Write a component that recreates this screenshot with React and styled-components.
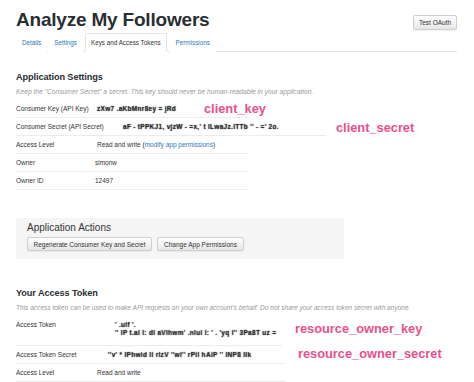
import styled, { createGlobalStyle } from "styled-components";

const GlobalStyle = createGlobalStyle`
  html, body {
    margin: 0;
    padding: 0;
    background: #ffffff;
  }
  body {
    font-family: "Liberation Sans", Arial, sans-serif;
    color: #333333;
  }
`;

const Page = styled.div`
  width: 474px;
  height: 382px;
  overflow: hidden;
  box-sizing: border-box;
  padding: 0 17px 0 16px;
`;

const Header = styled.div`
  display: flex;
  justify-content: space-between;
  align-items: flex-start;
  padding-top: 8px;
`;

const Title = styled.h1`
  margin: 0;
  font-size: 19px;
  line-height: 24px;
  font-weight: bold;
  letter-spacing: -0.2px;
  color: #292f33;
`;

const SmallButton = styled.button`
  font-family: "Liberation Sans", Arial, sans-serif;
  font-size: 6.5px;
  color: #333;
  width: ${(p) => p.$w}px;
  height: 14px;
  padding: 0;
  white-space: nowrap;
  border: 1px solid #cfcfcf;
  border-radius: 2px;
  background: linear-gradient(#ffffff, #e6e6e6);
  box-shadow: 0 1px 1px rgba(0, 0, 0, 0.05);
  cursor: pointer;
`;

const TestButton = styled(SmallButton)`
  margin-top: 7px;
  height: 15px;
`;

const Tabs = styled.div`
  display: flex;
  margin-top: 1px;
  border-bottom: 1px solid #e4e4e4;
`;

const Tab = styled.div`
  height: 19px;
  box-sizing: border-box;
  display: flex;
  align-items: center;
  padding: 0 5px;
  margin-right: ${(p) => (p.$active ? 3 : 1)}px;
  margin-left: ${(p) => (p.$active ? 1 : 0)}px;
  margin-bottom: -1px;
  font-size: 6.3px;
  color: ${(p) => (p.$active ? "#333" : "#2b7bb9")};
  background: #fff;
  border: 1px solid ${(p) => (p.$active ? "#e4e4e4" : "transparent")};
  border-bottom-color: ${(p) => (p.$active ? "#fff" : "transparent")};
  border-radius: 2px 2px 0 0;
`;

const Section = styled.section`
  margin-top: ${(p) => p.$top}px;
`;

const Heading = styled.h2`
  margin: 0;
  font-size: 9.2px;
  line-height: 12px;
  font-weight: bold;
  letter-spacing: -0.1px;
  color: #292f33;
`;

const Note = styled.p`
  margin: 4px 0 0;
  font-size: ${(p) => p.$size || 6.6}px;
  line-height: 10px;
  font-style: italic;
  color: #999;
  white-space: nowrap;
`;

const Table = styled.div`
  margin-top: ${(p) => p.$top || 3}px;
  display: flex;
  flex-direction: column;
`;

const Row = styled.div`
  position: relative;
  display: flex;
  align-items: ${(p) => (p.$tall ? "flex-start" : "center")};
  box-sizing: border-box;
  width: ${(p) => p.$w}px;
  height: ${(p) => p.$h || 18}px;
  padding-top: ${(p) => (p.$tall ? 5 : 0)}px;
  border-bottom: 1px solid #ececec;
  font-size: 6.5px;
  line-height: 8px;
`;

const Label = styled.div`
  flex: 0 0 ${(p) => p.$w || 80}px;
  color: #333;
`;

const Value = styled.div`
  color: #333;
  white-space: nowrap;
`;

const Link = styled.a`
  color: #2b7bb9;
  text-decoration: none;
`;

/* obfuscated key text, smudged like the screenshot */
const Hidden = styled.span`
  display: block;
  white-space: nowrap;
  color: transparent;
  font-weight: bold;
  letter-spacing: 0.3px;
  text-shadow: 0 0 1.1px rgba(20, 20, 20, 0.95), 0 0 0.4px rgba(20, 20, 20, 0.6);
`;

const Tag = styled.span`
  position: absolute;
  left: ${(p) => p.$x}px;
  top: ${(p) => p.$y}px;
  font-size: 12.8px;
  line-height: 15px;
  font-weight: bold;
  color: #e9508b;
  white-space: nowrap;
  text-shadow: 0 0 2px #fff, 0 0 1px #fff;
`;

const ActionsBox = styled.div`
  margin-top: 28px;
  width: 328px;
  box-sizing: border-box;
  padding: 4px 11px 8px;
  background: #f5f5f5;
`;

const ActionsTitle = styled.h3`
  margin: 0 0 3px;
  font-size: 10px;
  line-height: 12px;
  font-weight: normal;
  color: #333;
`;

const ButtonRow = styled.div`
  display: flex;
  gap: 5px;
`;

export default function App() {
  return (
    <Page>
      <GlobalStyle />
      <Header>
        <Title>Analyze My Followers</Title>
        <TestButton $w={44}>Test OAuth</TestButton>
      </Header>
      <Tabs>
        <Tab>Details</Tab>
        <Tab>Settings</Tab>
        <Tab $active>Keys and Access Tokens</Tab>
        <Tab>Permissions</Tab>
      </Tabs>

      <Section $top={19}>
        <Heading>Application Settings</Heading>
        <Note $size={6.7}>
          Keep the "Consumer Secret" a secret. This key should never be
          human-readable in your application.
        </Note>
        <Table>
          <Row $w={232}>
            <Label $w={81}>Consumer Key (API Key)</Label>
            <Value>
              <Hidden>zXw7 .aKbMnr8ey = jRd</Hidden>
            </Value>
            <Tag $x={188} $y={1}>client_key</Tag>
          </Row>
          <Row $w={310}>
            <Label $w={107}>Consumer Secret (API Secret)</Label>
            <Value>
              <Hidden>aF - tPPKJ1, vjzW - =x,' t lLwaJz.lTTb '' - =' 2o.</Hidden>
            </Value>
            <Tag $x={320} $y={2}>client_secret</Tag>
          </Row>
          <Row $w={232}>
            <Label $w={81}>Access Level</Label>
            <Value>
              Read and write (<Link href="#">modify app permissions</Link>)
            </Value>
          </Row>
          <Row $w={232}>
            <Label $w={79}>Owner</Label>
            <Value>simonw</Value>
          </Row>
          <Row $w={232}>
            <Label $w={79}>Owner ID</Label>
            <Value>12497</Value>
          </Row>
        </Table>
      </Section>

      <ActionsBox>
        <ActionsTitle>Application Actions</ActionsTitle>
        <ButtonRow>
          <SmallButton $w={125}>Regenerate Consumer Key and Secret</SmallButton>
          <SmallButton $w={87}>Change App Permissions</SmallButton>
        </ButtonRow>
      </ActionsBox>

      <Section $top={28}>
        <Heading>Your Access Token</Heading>
        <Note $size={6.55}>
          This access token can be used to make API requests on your own
          account's behalf. Do not share your access token secret with anyone.
        </Note>
        <Table $top={3}>
          <Row $w={266} $h={30} $tall>
            <Label $w={99}>Access Token</Label>
            <Value>
              <Hidden>' .ulf '.</Hidden>
              <Hidden>'' lP t.al l: dl aVlhwm' .nlul l: ' . 'yq l'' 3Pa8T uz =</Hidden>
            </Value>
            <Tag $x={279} $y={5}>resource_owner_key</Tag>
          </Row>
          <Row $w={269}>
            <Label $w={92}>Access Token Secret</Label>
            <Value>
              <Hidden>''v' * lPhwid ll rlzV ''wl'' rPil hAiP '' lNP8 lIk</Hidden>
            </Value>
            <Tag $x={282} $y={0}>resource_owner_secret</Tag>
          </Row>
          <Row $w={269}>
            <Label $w={81}>Access Level</Label>
            <Value>Read and write</Value>
          </Row>
        </Table>
      </Section>
    </Page>
  );
}
